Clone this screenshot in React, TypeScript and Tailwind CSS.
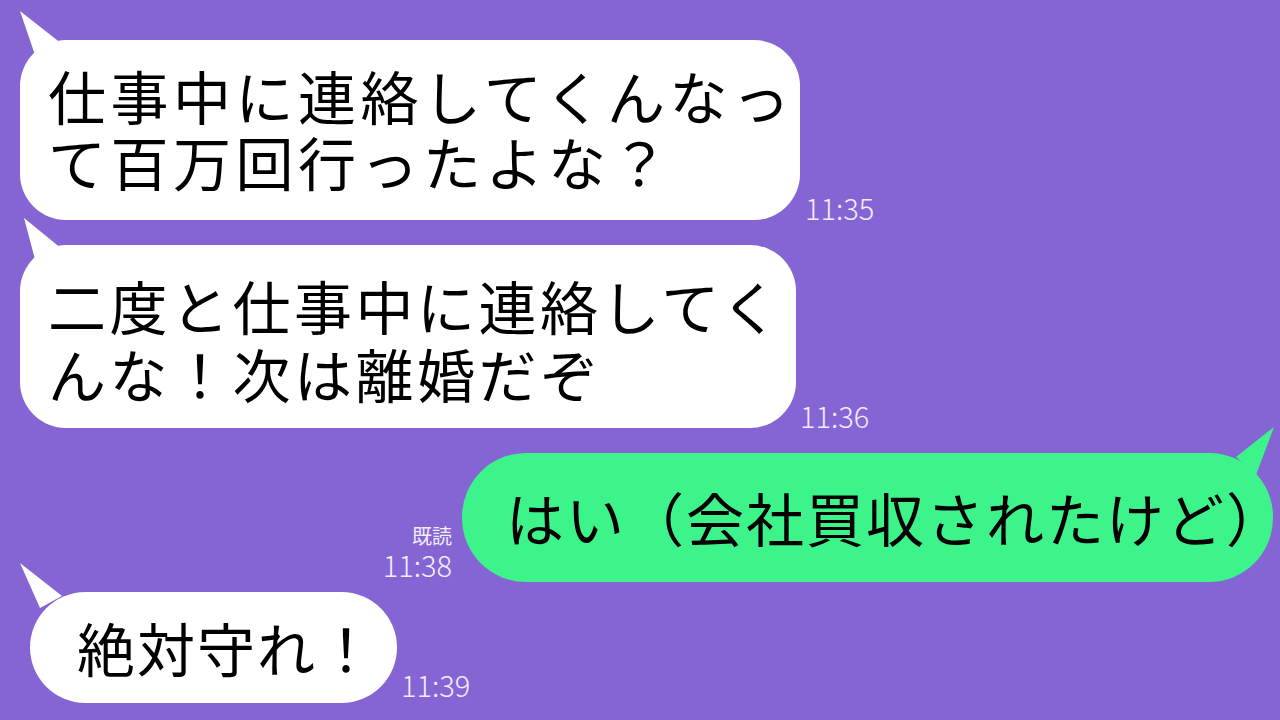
import React from "react";

const jp = { fontFamily: '"Noto Sans CJK JP", "Noto Sans", sans-serif' };

function TailLeft({ points, color }: { points: string; color: string }) {
  return (
    <svg className="absolute left-0 top-0 overflow-visible" width="1" height="1">
      <polygon points={points} fill={color} />
    </svg>
  );
}

export default function App() {
  return (
    <div
      className="w-[1280px] h-[720px] bg-[#8565d4] overflow-hidden flex flex-col"
      style={jp}
    >
      {/* Row 1 */}
      <div className="mt-[40px] pl-[20px] flex items-end">
        <div className="relative w-[780px] h-[180px] bg-white rounded-[46px] pl-[28px] pt-[22px]">
          <TailLeft points="0,-29 16,18 42,4" color="#ffffff" />
          <div className="text-[58px] leading-[66px] tracking-[4.5px] text-black">
            <div>仕事中に連絡してくんなっ</div>
            <div>て百万回行ったよな？</div>
          </div>
        </div>
        <div className="ml-[5px] mb-[-4px] text-[29px] leading-[34px] text-[#f1ecff] font-light">
          11:35
        </div>
      </div>

      {/* Row 2 */}
      <div className="mt-[25px] pl-[20px] flex items-end">
        <div className="relative w-[776px] h-[183px] bg-white rounded-[46px] pl-[28px] pt-[26px]">
          <TailLeft points="4,-27 16,18 42,4" color="#ffffff" />
          <div className="text-[58px] leading-[68px] tracking-[3.5px] text-black">
            <div>二度と仕事中に連絡してく</div>
            <div>んな！次は離婚だぞ</div>
          </div>
        </div>
        <div className="ml-[4px] mb-[-4px] text-[29px] leading-[34px] text-[#f1ecff] font-light">
          11:36
        </div>
      </div>

      {/* Row 3 */}
      <div className="mt-[25px] pr-[7px] flex items-end justify-end">
        <div className="mr-[10px] mb-[2px] flex flex-col items-end text-[#f1ecff]">
          <div className="text-[20px] leading-[24px]">既読</div>
          <div className="text-[29px] leading-[32px] font-light">11:38</div>
        </div>
        <div className="relative w-[811px] h-[129px] bg-[#3df48b] rounded-[64px] flex items-center pl-[44px]">
          <svg className="absolute right-0 top-0 overflow-visible" width="1" height="1">
            <polygon points="2,-26 -36,4 -16,22" fill="#3df48b" />
          </svg>
          <div className="text-[58px] leading-[64px] tracking-[2px] text-black mt-[-2px] whitespace-nowrap flex">
            <span>はい（会社買収されたけど</span>
            <span className="inline-block w-[34px] overflow-visible">）</span>
          </div>
        </div>
      </div>

      {/* Row 4 */}
      <div className="mt-[10px] pl-[30px] flex items-end">
        <div className="relative w-[367px] h-[111px] bg-white rounded-[56px] flex items-center pl-[47px]">
          <TailLeft points="-10,-29 10,16 32,4" color="#ffffff" />
          <div className="text-[58px] leading-[64px] tracking-[2px] text-black mt-[-2px] whitespace-nowrap">
            絶対守れ！
          </div>
        </div>
        <div className="ml-[4px] mb-[2px] text-[29px] leading-[34px] text-[#f1ecff] font-light">
          11:39
        </div>
      </div>
    </div>
  );
}
